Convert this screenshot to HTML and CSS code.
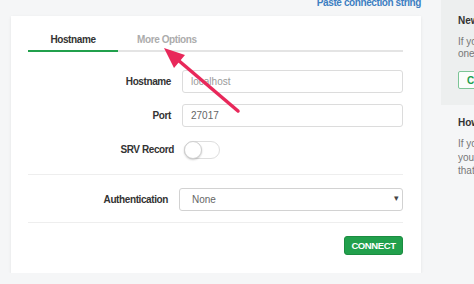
FILE: index.html
```html
<!DOCTYPE html>
<html>
	<head>
		<meta charset="utf-8">
		<title>Connect</title>
		<link rel="stylesheet" href="styles.css">
	</head>

	<body>
		<div id="page">
			<div id="main_col">
				<div class="paste_row">
					<a class="paste_link" href="#">Paste connection string</a>
				</div>

				<div class="card">
					<div class="tabs">
						<a class="tab tab_active" href="#">Hostname</a>
						<a class="tab" href="#">More Options</a>
					</div>

					<div class="section">
						<div class="row">
							<label class="label">Hostname</label>
							<input class="field field_light" type="text" value="localhost">
						</div>
						<div class="row">
							<label class="label">Port</label>
							<input class="field" type="text" value="27017">
						</div>
						<div class="row">
							<label class="label label_srv">SRV Record</label>
							<span class="toggle"><span class="knob"></span></span>
						</div>
					</div>

					<div class="section section_auth">
						<div class="row">
							<label class="label label_auth">Authentication</label>
							<div class="select_wrap">
								<select class="field select">
									<option>None</option>
								</select>
							</div>
						</div>
					</div>

					<div class="actions">
						<button class="btn_connect">CONNECT</button>
					</div>
				</div>
			</div>

			<div id="side_col">
				<div class="side_box">
					<h4 class="side_title">New to Compass and don't have a cluster?</h4>
					<p class="side_text">If you don't already have a cluster, you can create<br>one for free using MongoDB Atlas</p>
					<button class="btn_outline">CREATE FREE CLUSTER</button>
				</div>
				<div class="side_help">
					<h4 class="side_title">How do I find my connection string in Atlas?</h4>
					<p class="side_text side_text_loose">If you have an Atlas cluster, go to the Cluster view.<br>your cluster and click the Connect button for<br>that cluster, then copy the string shown.</p>
				</div>
			</div>
		</div>

		<svg class="annotation" width="474" height="284" viewBox="0 0 474 284">
			<line x1="238" y1="111" x2="178" y2="60" stroke="#e8285a" stroke-width="3.5" stroke-linecap="round"/>
			<polygon points="164,48 185,55 174,68" fill="#e8285a"/>
		</svg>
	</body>
</html>
```

FILE: styles.css
```css
:root {
	--bg: #f5f6f7;
	--panel: #edefef;
	--text: #333333;
	--muted: #777777;
	--line: #e4e4e4;
	--green: #21a04c;
	--blue: #3d7fc2;
}

html, body {
	margin: 0;
	padding: 0;
	overflow: hidden;
}

body {
	background-color: var(--bg);
	font-family: "Liberation Sans", Arial, sans-serif;
	font-size: 10px;
	color: var(--text);
}

#page {
	display: flex;
	gap: 20px;
	padding-left: 11px;
	margin-top: -3px;
	width: 700px;
}

#main_col {
	width: 410px;
	flex-shrink: 0;
}

.paste_row {
	display: flex;
	justify-content: flex-end;
	height: 12px;
	margin-bottom: 7px;
}

.paste_link {
	color: var(--blue);
	font-weight: bold;
	line-height: 12px;
	letter-spacing: -0.4px;
	text-decoration: none;
}

.card {
	background-color: #ffffff;
	padding: 18px 18px 18px 17px;
	box-shadow: 0 1px 3px rgba(0, 0, 0, 0.08);
}

.tabs {
	display: flex;
	border-bottom: 2px solid var(--line);
}

.tab {
	font-weight: bold;
	letter-spacing: -0.4px;
	line-height: 12px;
	padding: 0 19px 4px 19px;
	color: #acacac;
	text-decoration: none;
	text-align: center;
	border-bottom: 2px solid transparent;
	margin-bottom: -2px;
}

.tab_active {
	width: 52px;
	color: var(--text);
	border-bottom-color: var(--green);
}

.section {
	display: flex;
	flex-direction: column;
	gap: 11px;
	padding: 18px 0 13px 0;
	border-bottom: 1px solid #eeeeee;
}

.section_auth {
	padding: 13px 0 11px 0;
}

.row {
	display: flex;
	align-items: center;
	height: 23px;
}

.label {
	width: 143px;
	margin-right: 11px;
	text-align: right;
	font-weight: bold;
	letter-spacing: -0.4px;
	color: var(--text);
}

.label_srv {
	width: 146px;
	margin-right: 10px;
}

.label_auth {
	width: 140px;
}

.field {
	flex: 1;
	box-sizing: border-box;
	height: 23px;
	border: 1px solid #dcdcdc;
	border-radius: 3px;
	padding: 0 8px;
	font-family: "Liberation Sans", Arial, sans-serif;
	font-size: 10px;
	color: #666666;
	background-color: #ffffff;
	outline: none;
}

.field_light {
	color: #9a9a9a;
}

.toggle {
	display: block;
	position: relative;
	box-sizing: border-box;
	width: 36px;
	height: 18px;
	border: 1px solid #dedede;
	border-radius: 9px;
	background-color: #ffffff;
}

.knob {
	position: absolute;
	left: -1px;
	top: -1px;
	box-sizing: border-box;
	width: 18px;
	height: 18px;
	border-radius: 50%;
	border: 1px solid #cfcfcf;
	background-color: #ffffff;
	box-shadow: 0 1px 2px rgba(0, 0, 0, 0.2);
}

.select_wrap {
	flex: 1;
	display: flex;
	position: relative;
}

.select_wrap::after {
	content: "\25BE";
	position: absolute;
	right: 4px;
	top: 5px;
	font-size: 9px;
	color: #444444;
}

.select {
	appearance: none;
	-webkit-appearance: none;
	padding-left: 12px;
	border-color: #d2d2d2;
}

.actions {
	display: flex;
	justify-content: flex-end;
	padding-top: 13px;
}

.btn_connect {
	width: 59px;
	height: 19px;
	padding: 0;
	border: 1px solid #1b8c40;
	border-radius: 3px;
	background-color: var(--green);
	color: #ffffff;
	font-family: "Liberation Sans", Arial, sans-serif;
	font-size: 9.5px;
	font-weight: bold;
	letter-spacing: -0.4px;
}

#side_col {
	width: 230px;
	flex-shrink: 0;
}

.side_box {
	background-color: var(--panel);
	padding: 18px 17px 16px 17px;
}

.side_help {
	padding: 12px 17px 0 17px;
}

.side_title {
	margin: 0;
	font-size: 10px;
	line-height: 12px;
	font-weight: bold;
	white-space: nowrap;
	color: var(--text);
}

.side_text {
	margin: 9px 0 11px 0;
	line-height: 12px;
	white-space: nowrap;
	color: var(--muted);
}

.side_text_loose {
	margin-top: 8px;
	line-height: 13.5px;
}

.btn_outline {
	height: 18px;
	padding: 0 8px;
	border: 1px solid #7cc596;
	border-radius: 2px;
	background-color: #fbfdfc;
	color: var(--green);
	font-family: "Liberation Sans", Arial, sans-serif;
	font-size: 10px;
	font-weight: bold;
}

.annotation {
	position: absolute;
	left: 0;
	top: 0;
	pointer-events: none;
}
```
